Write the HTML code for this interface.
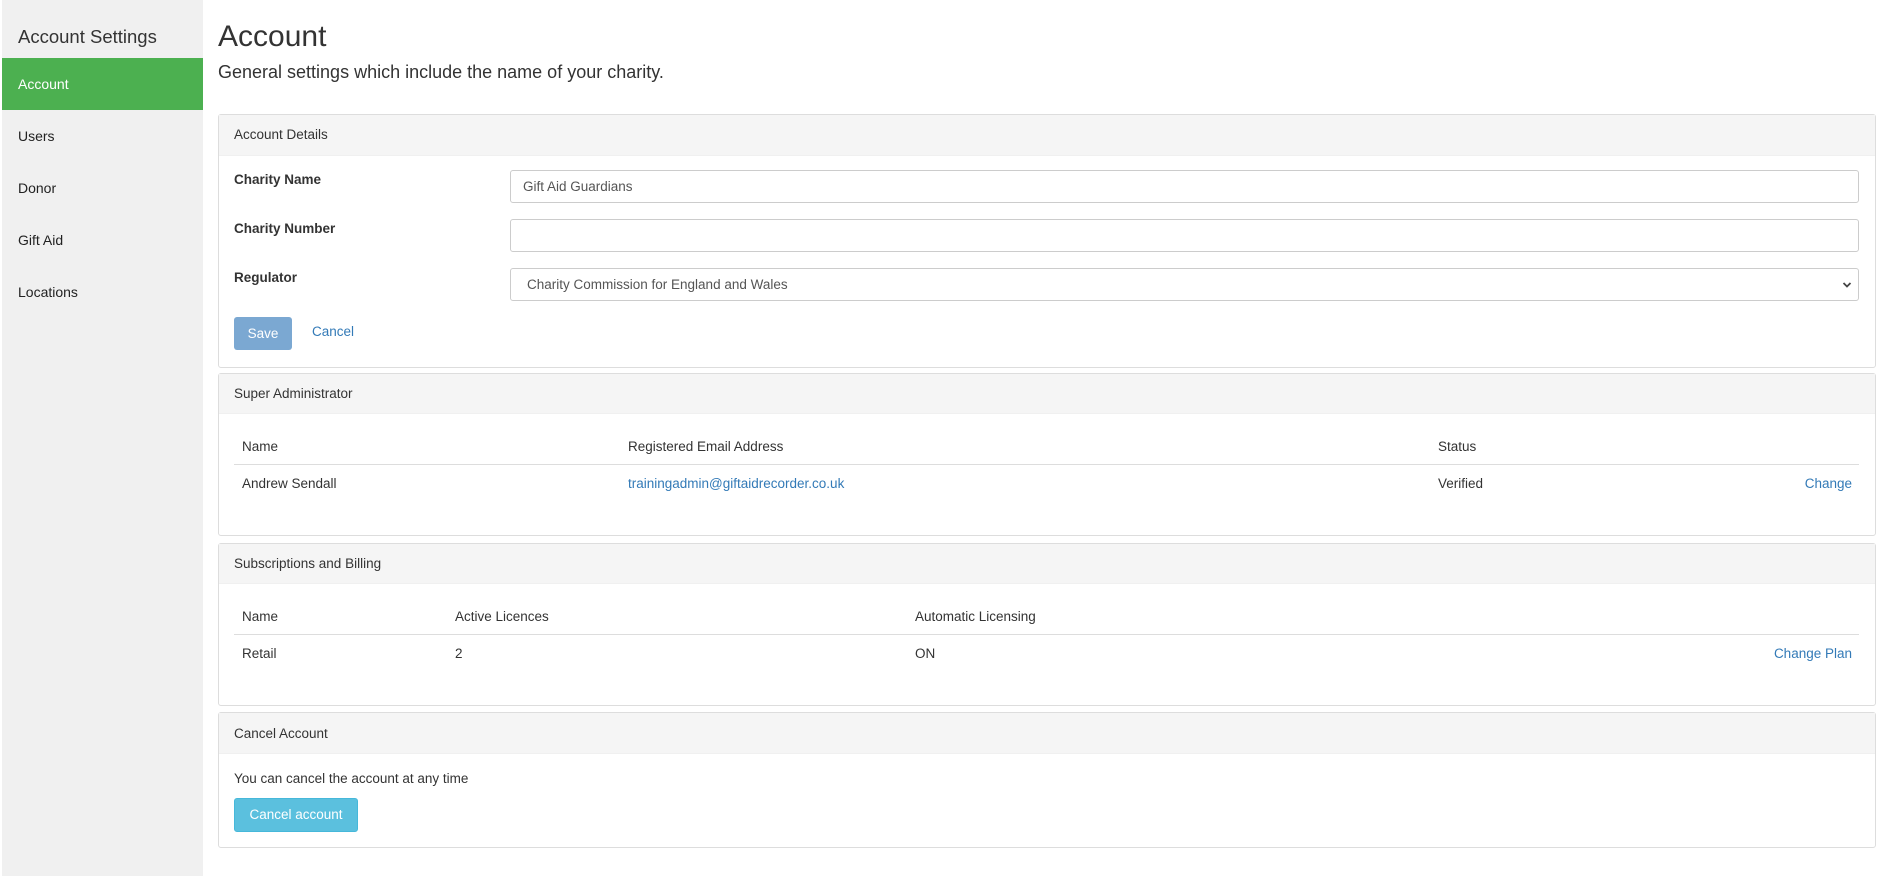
<!DOCTYPE html>
<html><head><meta charset="utf-8"><style>
*{margin:0;padding:0;box-sizing:border-box}
body{width:1894px;height:876px;background:#fff;font-family:"Liberation Sans",Arial,sans-serif;color:#333;position:relative;overflow:hidden;font-size:13.5px}
.a{position:absolute;white-space:nowrap}
.side{position:absolute;left:2px;top:0;width:201px;height:876px;background:#f0f0f0}
.nav{position:absolute;left:18px;font-size:14px;color:#222;line-height:16px}
.panel{position:absolute;left:218px;width:1658px;border:1px solid #ddd;border-radius:3px;background:#fff}
.ph{position:absolute;left:0;top:0;right:0;background:#f5f5f5;border-bottom:1px solid #f0f0f0}
.ph span{position:absolute;left:15px;font-size:13.5px}
.inp{position:absolute;left:510px;width:1349px;height:33px;border:1px solid #ccc;border-radius:3px;background:#fff}
.lbl{position:absolute;left:234px;font-weight:bold;font-size:13.5px}
.line{position:absolute;left:234px;width:1625px;height:1px;background:#ddd}
.lnk{color:#337ab7}
</style></head><body>
<div class="side"></div>
<div class="a" style="left:18px;top:26px;font-size:18.5px;color:#333">Account Settings</div>
<div style="position:absolute;left:2px;top:58px;width:201px;height:52px;background:#4cb050"></div>
<div class="nav" style="top:76px;color:#fff">Account</div>
<div class="nav" style="top:128px">Users</div>
<div class="nav" style="top:180px">Donor</div>
<div class="nav" style="top:232px">Gift Aid</div>
<div class="nav" style="top:284px">Locations</div>

<div class="a" style="left:218px;top:20px;font-size:30px">Account</div>
<div class="a" style="left:218px;top:62px;font-size:18px">General settings which include the name of your charity.</div>

<div class="panel" style="top:114px;height:254px"><div class="ph" style="height:41px"><span style="top:12px">Account Details</span></div></div>
<div class="lbl" style="top:172px">Charity Name</div>
<div class="lbl" style="top:221px">Charity Number</div>
<div class="lbl" style="top:270px">Regulator</div>
<div class="inp" style="top:170px"><span class="a" style="left:12px;top:8px;color:#555">Gift Aid Guardians</span></div>
<div class="inp" style="top:219px"></div>
<div class="inp" style="top:268px"><span class="a" style="left:16px;top:8px;color:#555">Charity Commission for England and Wales</span>
<svg style="position:absolute;right:6px;top:12px" width="10" height="8" viewBox="0 0 10 8"><path d="M1.5 2 L5 5.5 L8.5 2" fill="none" stroke="#444" stroke-width="1.8"/></svg></div>
<div style="position:absolute;left:234px;top:317px;width:58px;height:33px;background:#7ba8d2;border-radius:3px;color:#fff;font-size:13.5px;text-align:center;line-height:33px">Save</div>
<div class="a lnk" style="left:312px;top:324px">Cancel</div>

<div class="panel" style="top:373px;height:163px"><div class="ph" style="height:40px"><span style="top:12px">Super Administrator</span></div></div>
<div class="a" style="left:242px;top:439px">Name</div>
<div class="a" style="left:628px;top:439px">Registered Email Address</div>
<div class="a" style="left:1438px;top:439px">Status</div>
<div class="line" style="top:464px"></div>
<div class="a" style="left:242px;top:476px">Andrew Sendall</div>
<div class="a lnk" style="left:628px;top:476px">trainingadmin@giftaidrecorder.co.uk</div>
<div class="a" style="left:1438px;top:476px">Verified</div>
<div class="a lnk" style="right:42px;top:476px">Change</div>

<div class="panel" style="top:543px;height:163px"><div class="ph" style="height:40px"><span style="top:12px">Subscriptions and Billing</span></div></div>
<div class="a" style="left:242px;top:609px">Name</div>
<div class="a" style="left:455px;top:609px">Active Licences</div>
<div class="a" style="left:915px;top:609px">Automatic Licensing</div>
<div class="line" style="top:634px"></div>
<div class="a" style="left:242px;top:646px">Retail</div>
<div class="a" style="left:455px;top:646px">2</div>
<div class="a" style="left:915px;top:646px">ON</div>
<div class="a lnk" style="right:42px;top:646px">Change Plan</div>

<div class="panel" style="top:712px;height:136px"><div class="ph" style="height:41px"><span style="top:13px">Cancel Account</span></div></div>
<div class="a" style="left:234px;top:771px">You can cancel the account at any time</div>
<div style="position:absolute;left:234px;top:798px;width:124px;height:34px;background:#5bc0de;border:1px solid #46b8da;border-radius:3px;color:#fff;font-size:13.5px;text-align:center;line-height:32px;white-space:nowrap">Cancel account</div>
</body></html>
